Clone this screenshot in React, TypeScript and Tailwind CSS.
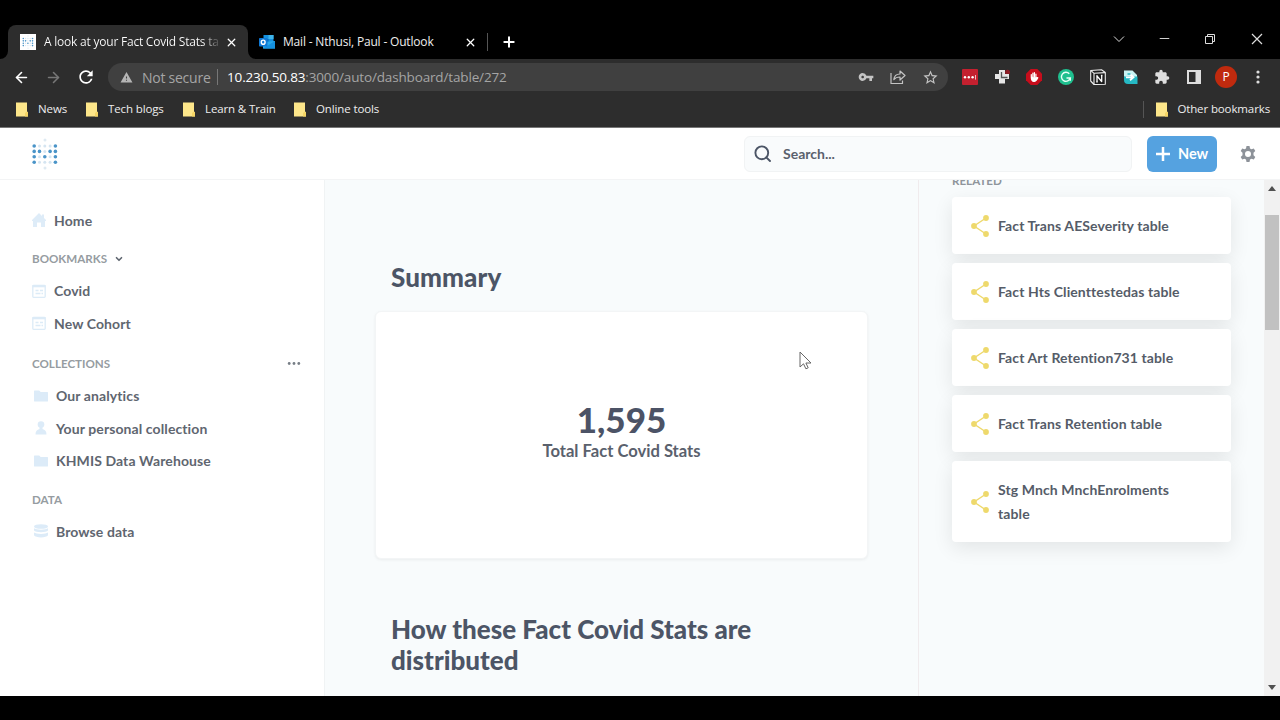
import React from 'react';
import { ArrowLeft, ArrowRight, ChevronDown, Minus, Plus, X } from 'lucide-react';
import { MdExtension, MdRefresh, MdStarOutline, MdVpnKey, MdWarning } from 'react-icons/md';

const bookmarks = [
  { label: 'News', width: 'w-[70px]' },
  { label: 'Tech blogs', width: 'w-[97px]' },
  { label: 'Learn & Train', width: 'w-[111px]' },
  { label: 'Online tools', width: 'w-[100px]' },
];

const related = [
  'Fact Trans AESeverity table',
  'Fact Hts Clienttestedas table',
  'Fact Art Retention731 table',
  'Fact Trans Retention table',
  'Stg Mnch MnchEnrolments table',
];

// 1 = blue dot, 0 = faded dot
const logoRows = [
  [1, 0, 0, 0, 1],
  [1, 1, 0, 1, 1],
  [1, 0, 1, 0, 1],
  [1, 0, 0, 0, 1],
];

const Logo: React.FC<{ className: string }> = ({ className }) => (
  <svg className={className} viewBox="0 0 26 32">
    <circle cx="13" cy="2" r="1.5" fill="#dfeaf2" />
    <circle cx="13" cy="30" r="1.5" fill="#dfeaf2" />
    {logoRows.map((row, y) =>
      row.map((on, x) => (
        <circle
          key={`${x}-${y}`}
          cx={2.2 + x * 5.3}
          cy={8 + y * 5.4}
          r={on ? 1.8 : 1.5}
          fill={on ? '#4a94c8' : '#d5e5f1'}
        />
      )),
    )}
  </svg>
);

const FolderTab: React.FC = () => (
  <svg className="h-[15px] w-3 shrink-0" viewBox="0 0 12 15">
    <path d="M0 0.5h11v9l1 1v4H0z" fill="#fde68a" />
    <path d="M9 11l2-1.5 1 1v4H9z" fill="#f5d565" />
  </svg>
);

const OutlookIcon: React.FC = () => (
  <svg className="h-4 w-4 shrink-0" viewBox="0 0 16 16">
    <path d="M4.5 1h10v8h-10z" fill="#1490df" />
    <path d="M9.5 1h5v4h-5z" fill="#3fb4ea" />
    <path d="M4.5 5h5v5h-5z" fill="#0364b8" />
    <path d="M4 8l12-1v7.5H4z" fill="#28a8ea" />
    <path d="M16 7L4 14.5h12z" fill="#1490df" />
    <rect x="0" y="4" width="8.5" height="8.5" rx="0.8" fill="#0f78d4" />
    <ellipse cx="4.2" cy="8.2" rx="1.9" ry="2.1" fill="none" stroke="#fff" strokeWidth="1.4" />
  </svg>
);

const ShareArrow: React.FC = () => (
  <svg className="h-4 w-4" viewBox="0 0 16 16" fill="none" stroke="#c4c4c4" strokeWidth="1.2" strokeLinejoin="round">
    <path d="M1 4v10.5h11.5v-3" />
    <path d="M3.8 10.5C4.2 7 6.5 5 10 5V2l5 4.5-5 4.5V8C7.2 8 5.2 8.8 3.8 10.5z" />
  </svg>
);

const Extensions: React.FC = () => (
  <div className="flex items-center gap-4">
    <svg className="h-4 w-4" viewBox="0 0 16 16">
      <rect width="16" height="16" rx="1" fill="#c4202f" />
      <circle cx="3" cy="8.3" r="1.2" fill="#fff" />
      <circle cx="6.8" cy="8.3" r="1.2" fill="#fff" />
      <circle cx="10.6" cy="8.3" r="1.2" fill="#fff" />
      <path d="M13.5 6v4.6" stroke="#fff" strokeWidth="0.7" />
    </svg>
    <svg className="h-4 w-4" viewBox="0 0 16 16">
      <circle cx="13.5" cy="3.2" r="2.5" fill="#8c1c24" />
      <path d="M5 1h6v4h4v5h-4v4.5H5V10H1V5h4z" fill="#e6e6e6" />
      <path d="M7.5 3v5.5h6" fill="none" stroke="#555" strokeWidth="1.3" />
    </svg>
    <svg className="h-4 w-4" viewBox="0 0 16 16">
      <path d="M4.7 0h6.6L16 4.7v6.6L11.3 16H4.7L0 11.3V4.7z" fill="#c70d1c" />
      <path
        d="M5.3 8.5V5.5M6.9 8V4M8.4 8V3.6M9.9 8.5V5M5.3 8.2c0 2.800 1.100 4.200 2.800 4.200s2.500-1.200 3.700-3.700c-.8-.5-1.400 0-1.900.6z"
        fill="#fff"
        stroke="#fff"
        strokeWidth="1.2"
        strokeLinecap="round"
        strokeLinejoin="round"
      />
    </svg>
    <svg className="h-4 w-4" viewBox="0 0 16 16">
      <circle cx="8" cy="8" r="8" fill="#1fc08f" />
      <path d="M11.3 4.8A4.5 4.5 0 1 0 12.3 9H8.5M12.3 9v2.8" fill="none" stroke="#e8fff8" strokeWidth="1.4" />
    </svg>
    <svg className="h-4 w-4" viewBox="0 0 16 16" strokeLinejoin="round">
      <path d="M0.7 1.5l10.8-.8 3.8 2.8v11.8L4 15.5 0.7 12z" fill="#1c1c1c" stroke="#eee" strokeWidth="1.1" />
      <path d="M1 1.7L4 4.3l11-.7M4 4.3v11" fill="none" stroke="#eee" strokeWidth="1.1" />
      <path d="M7 12.800V7l4.700 5.500V6.500M6.200 6.800h1.600M6.200 12.800h1.600M10.900 6.500h1.600" fill="none" stroke="#fff" strokeWidth="1.3" />
    </svg>
    <svg className="h-4 w-4" viewBox="0 0 16 16">
      <path d="M2 1.500h8.500L15 6v3H4.500A2.500 2.500 0 0 1 2 6.500z" fill="#c9f3f3" />
      <path d="M2 7.500h13.500v7.500H6a4 4 0 0 1-4-4z" fill="#26b9c4" />
      <path d="M4 8.300h6M8 5.300l3.500 3-3.500 3" fill="none" stroke="#fff" strokeWidth="1.800" />
      <path d="M5.500 5h3" stroke="#26b9c4" strokeWidth="1.500" />
    </svg>
    <MdExtension size={16} color="#dedede" />
    <svg className="h-4 w-4" viewBox="0 0 16 16">
      <path d="M1 1h14v14H1zM3 3v10h6.5V3z" fill="#dedede" fillRule="evenodd" />
    </svg>
  </div>
);

const BrowserChrome: React.FC = () => (
  <div className="h-32 shrink-0 border-b border-[#777] bg-[#2d2d2d] font-['Open_Sans',sans-serif] text-white">
    <div className="flex h-[59px] items-end bg-black">
      <svg className="h-2 w-2" viewBox="0 0 8 8">
        <path d="M8 0v8H0a8 8 0 0 0 8-8z" fill="#2d2d2d" />
      </svg>
      <div className="flex h-[34px] w-60 items-center rounded-t-lg bg-[#2d2d2d] pl-3">
        <span className="flex h-4 w-4 shrink-0 items-center justify-center bg-white">
          <Logo className="h-[14px] w-3" />
        </span>
        <span className="ml-2 w-[176px] bg-linear-to-r from-white from-90% to-[#444] bg-clip-text text-[12px] tracking-[-0.22px] whitespace-nowrap text-transparent">
          A look at your Fact Covid Stats ta
        </span>
        <X className="ml-[5px]" size={13} strokeWidth={2.4} />
      </div>
      <svg className="h-2 w-2" viewBox="0 0 8 8">
        <path d="M0 0v8h8a8 8 0 0 1-8-8z" fill="#2d2d2d" />
      </svg>
      <div className="flex h-[34px] w-[231px] items-center border-r border-transparent pl-[3px]">
        <OutlookIcon />
        <span className="ml-2 w-[181px] text-[12px] tracking-[-0.18px] whitespace-nowrap text-[#eee]">
          Mail - Nthusi, Paul - Outlook
        </span>
        <X size={13} strokeWidth={2.4} />
      </div>
      <div className="mb-2 h-[18px] w-px bg-[#555]" />
      <Plus className="mb-[9px] ml-[13px]" size={16} strokeWidth={3} />
      <div className="mb-[13px] ml-auto flex items-center pr-[17px] text-[#ddd]">
        <svg className="h-3 w-3" viewBox="0 0 12 12" fill="none" stroke="currentColor">
          <path d="M1 3.5l5 5 5-5" />
        </svg>
        <Minus className="ml-8" size={15} strokeWidth={1.5} />
        <svg className="ml-8 h-3 w-3" viewBox="0 0 12 12" fill="none" stroke="currentColor">
          <path d="M1.5 3.5h7v7h-7zM3.5 3.5v-2h7v7h-2" />
        </svg>
        <svg className="ml-[35px] h-3 w-3" viewBox="0 0 12 12" stroke="currentColor" strokeWidth="1.2">
          <path d="M1 1l10 10M11 1L1 11" />
        </svg>
      </div>
    </div>

    <div className="flex h-9 items-center">
      <ArrowLeft className="ml-[13px]" size={17} strokeWidth={2.3} />
      <ArrowRight className="ml-[15px]" size={17} strokeWidth={2.2} color="#777" />
      <MdRefresh className="ml-[14px]" size={20} />
      <div className="ml-3 flex h-7 w-[840px] items-center rounded-full bg-[#404040] pl-3 text-[14px]">
        <MdWarning size={13} color="#b5b5b5" />
        <span className="w-[84px] pl-[9px] tracking-[-0.25px] whitespace-nowrap text-[#a5a5a5]">Not secure</span>
        <span className="h-4 w-px bg-[#777]" />
        <span className="ml-[9px] text-[13.5px] tracking-[-0.15px] whitespace-nowrap text-[#a5a5a5]">
          <span className="text-white">10.230.50.83</span>:3000/auto/dashboard/table/272
        </span>
        <div className="mr-[9px] ml-auto flex items-center gap-4">
          <MdVpnKey size={16} color="#c4c4c4" />
          <ShareArrow />
          <MdStarOutline size={17} color="#c4c4c4" />
        </div>
      </div>
      <div className="ml-3.5">
        <Extensions />
      </div>
      <div className="ml-[13px] flex h-[22px] w-[22px] items-center justify-center rounded-full bg-[#c02a0e] text-[12px]">P</div>
      <svg className="ml-[19px] h-4 w-1" viewBox="0 0 4 16" fill="#ddd">
        <circle cx="2" cy="3" r="1.6" />
        <circle cx="2" cy="8" r="1.6" />
        <circle cx="2" cy="13" r="1.6" />
      </svg>
    </div>

    <div className="flex h-[28px] items-center pl-4 text-[11.5px] tracking-[-0.12px] text-[#eee]">
      {bookmarks.map((b) => (
        <div key={b.label} className={`flex items-center gap-2.5 whitespace-nowrap ${b.width}`}>
          <FolderTab />
          {b.label}
        </div>
      ))}
      <div className="mr-[10px] ml-auto flex items-center">
        <div className="mr-3 h-[17px] w-px bg-[#555]" />
        <FolderTab />
        <span className="ml-[9px] whitespace-nowrap">Other bookmarks</span>
      </div>
    </div>
  </div>
);

const HomeIcon: React.FC = () => (
  <svg className="h-4 w-[14px]" viewBox="0 0 14 16" fill="#deecf8">
    <path d="M7 1L0 8v1h1v6h4v-4.500h4V15h4V9h1V8l-2-2V2.500h-2V4z" />
  </svg>
);

const DashboardIcon: React.FC = () => (
  <svg className="h-[14px] w-[14px]" viewBox="0 0 14 14" fill="none" stroke="#dcebf7">
    <rect x="0.8" y="1.3" width="12.4" height="12" rx="0.8" strokeWidth="1.3" />
    <path d="M0.5 2.2h13" strokeWidth="2.2" />
    <path d="M3.5 6.5h3M8 6.5h3M3.5 9.5h5M9.5 9.5h1.5" strokeWidth="1.5" />
  </svg>
);

const FolderIcon: React.FC = () => (
  <svg className="h-3 w-[14px]" viewBox="0 0 14 12" fill="#dcebf8">
    <path d="M0 1a.6.6 0 0 1 .6-.6h4.6L6.7 2h6.7a.6.6 0 0 1 .6.6V11a.6.6 0 0 1-.6.6H.6A.6.6 0 0 1 0 11z" />
  </svg>
);

const PersonIcon: React.FC = () => (
  <svg className="h-[14px] w-[14px]" viewBox="0 0 14 14" fill="#dcebf8">
    <circle cx="7" cy="3.5" r="3.3" />
    <path d="M5.5 6h3v2c2.5.8 4 2.2 4 5.5h-11c0-3.3 1.5-4.7 4-5.5z" />
  </svg>
);

const DatabaseIcon: React.FC = () => (
  <svg className="h-[14px] w-[14px]" viewBox="0 0 14 14" fill="#dcebf8">
    <ellipse cx="7" cy="2.5" rx="7" ry="2.3" />
    <path d="M0 4.2c2 1.9 12 1.9 14 0v2.4c-1.5 2.2-12.5 2.2-14 0z" />
    <path d="M0 8.5c2 1.9 12 1.9 14 0v2.8c-1.5 2.8-12.5 2.8-14 0z" />
  </svg>
);

interface NavItemProps {
  icon: React.ReactNode;
  label: string;
  nested?: boolean;
}

const NavItem: React.FC<NavItemProps> = ({ icon, label, nested }) => (
  <div
    className={`flex h-[32.5px] items-center gap-2 text-[14px] tracking-[0.1px] font-bold text-[#5f6670] ${nested ? 'pl-[34px]' : 'pl-8'}`}
  >
    {icon}
    <span className="whitespace-nowrap">{label}</span>
  </div>
);

const Sidebar: React.FC = () => (
  <aside className="w-[325px] shrink-0 border-r border-[#f0f3f4] bg-white pt-6">
    <NavItem icon={<HomeIcon />} label="Home" />
    <div className="mt-3 mb-1.5 flex h-5 items-center pl-8 text-[11.6px] font-bold text-[#969ca1]">
      BOOKMARKS
      <ChevronDown className="ml-[7px]" size={10} strokeWidth={4} color="#5f6670" />
    </div>
    <NavItem icon={<DashboardIcon />} label="Covid" />
    <NavItem icon={<DashboardIcon />} label="New Cohort" />
    <div className="mt-[14px] mb-1.5 flex h-5 items-center justify-between pr-[23px] pl-8 text-[11.6px] font-bold text-[#969ca1]">
      COLLECTIONS
      <svg className="h-3 w-[14px]" viewBox="0 0 14 12" fill="#777e86">
        <circle cx="2.2" cy="5.5" r="1.4" />
        <circle cx="7" cy="5.5" r="1.4" />
        <circle cx="11.8" cy="5.5" r="1.4" />
      </svg>
    </div>
    <NavItem nested icon={<FolderIcon />} label="Our analytics" />
    <NavItem nested icon={<PersonIcon />} label="Your personal collection" />
    <NavItem nested icon={<FolderIcon />} label="KHMIS Data Warehouse" />
    <div className="mt-[13px] mb-[5px] flex h-5 items-center pl-8 text-[11.6px] font-bold text-[#969ca1]">DATA</div>
    <NavItem nested icon={<DatabaseIcon />} label="Browse data" />
  </aside>
);

const AppHeader: React.FC = () => (
  <header className="flex h-[52px] shrink-0 items-center border-b border-[#f3f4f5] bg-white pl-8">
    <Logo className="h-8 w-[26px]" />
    <div className="ml-auto flex h-9 w-[388px] items-center rounded-md border border-[#f1f3f4] bg-[#f9fbfc] pl-[9px]">
      <svg className="h-[17px] w-[17px]" viewBox="0 0 17 17" fill="none" stroke="#4c5566" strokeWidth="1.9">
        <circle cx="7.8" cy="7.8" r="6.4" />
        <path d="M12.3 12.3l3.7 3.7" strokeLinecap="round" />
      </svg>
      <span className="ml-3 text-[14px] font-bold text-[#5a616d]">Search...</span>
    </div>
    <button className="ml-[15px] flex h-9 w-[70px] items-center rounded-md bg-[#55a2e0] pl-[9px] text-[14.5px] font-bold text-white">
      <svg className="h-[14px] w-[14px]" viewBox="0 0 14 14" stroke="#fff" strokeWidth="2.5">
        <path d="M7 0v14M0 7h14" />
      </svg>
      <span className="mt-px ml-2">New</span>
    </button>
    <svg className="mr-6 ml-[23px] h-4 w-4" viewBox="0 0 16 16">
      <path
        d="M6.5 0h3l.5 2.4 1.5.9L13.8 2.5l1.5 2.6-1.8 1.7v2.4l1.8 1.7-1.5 2.6-2.3-.8-1.5.9L9.5 16h-3L6 13.6l-1.5-.9-2.3.8L.7 10.9l1.8-1.7V6.8L.7 5.1l1.5-2.6 2.3.8L6 2.4zM8 5a3 3 0 1 0 0 6 3 3 0 0 0 0-6z"
        fill="#8d9299"
        fillRule="evenodd"
      />
    </svg>
  </header>
);

const RelatedIcon: React.FC = () => (
  <svg className="h-[22px] w-[18px] shrink-0" viewBox="0 0 18 22" fill="#eed96c">
    <path d="M15 3L3 11l12 8" fill="none" stroke="#eed96c" strokeWidth="1.4" />
    <circle cx="15" cy="3" r="2.9" />
    <circle cx="3" cy="11" r="2.9" />
    <circle cx="15" cy="19" r="2.9" />
  </svg>
);

const App: React.FC = () => (
  <div className="flex h-[720px] w-[1280px] flex-col overflow-hidden bg-black font-['Lato',sans-serif]">
    <BrowserChrome />
    <AppHeader />
    <div className="flex h-[516px] shrink-0 overflow-hidden bg-[#f8fbfc]">
      <Sidebar />

      <main className="relative w-[593px] shrink-0 px-[50px] pt-[77px]">
        <h2 className="ml-4 text-[26px] leading-10 tracking-[0.1px] font-black text-[#4c5566]">Summary</h2>
        <div className="mt-[14px] flex h-[248px] w-[493px] flex-col items-center justify-center rounded-md border border-[#f3f5f6] bg-white pb-[9px] shadow-[0_1px_3px_rgba(0,0,0,0.06)]">
          <span className="text-[35px] leading-10 font-black text-[#4c5366]">1,595</span>
          <span className="text-[16.6px] leading-6 font-bold text-[#5a616d]">Total Fact Covid Stats</span>
        </div>
        <h2 className="mt-[55px] ml-4 w-[400px] text-[26px] leading-[31px] font-black text-[#4c5566]">
          How these Fact Covid Stats are distributed
        </h2>
        <svg className="absolute top-[171px] left-[474px] h-[19px] w-[13px]" viewBox="0 0 13 19">
          <path d="M1 1v15l3.5-3.2 2.4 5 2.3-1-2.3-4.8H12z" fill="#fff" stroke="#666" />
        </svg>
      </main>

      <section className="w-[346px] shrink-0 border-l border-[#f0ebed] pl-[33px]">
        <div className="-mt-2 mb-[7px] h-[18px] text-[11.6px] leading-[18px] font-bold text-[#8f959b]">RELATED</div>
        <div className="flex w-[279px] flex-col gap-[9px]">
          {related.map((title) => (
            <div
              key={title}
              className="flex items-center gap-[9px] rounded bg-white py-[16.5px] pr-10 pl-[19px] shadow-[0_6px_20px_rgba(0,0,0,0.09)]"
            >
              <RelatedIcon />
              <span className="text-[14px] leading-6 tracking-[0.1px] font-bold text-[#555c68]">{title}</span>
            </div>
          ))}
        </div>
      </section>

      <div className="flex w-4 shrink-0 flex-col items-center bg-[#f1f1f1]">
        <svg className="mt-1.5 h-[5px] w-2" viewBox="0 0 8 5">
          <path d="M4 0l4 5H0z" fill="#505050" />
        </svg>
        <div className="mt-6 h-[115px] w-3.5 bg-[#c1c1c1]" />
        <svg className="mt-auto mb-1.5 h-[5px] w-2" viewBox="0 0 8 5">
          <path d="M0 0h8L4 5z" fill="#505050" />
        </svg>
      </div>
    </div>
  </div>
);

export default App;
